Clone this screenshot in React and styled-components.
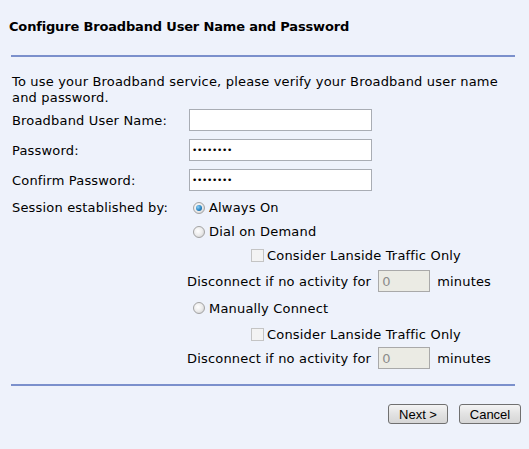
import React from 'react'
import styled, { createGlobalStyle } from 'styled-components'

const GlobalStyle = createGlobalStyle`
  html, body {
    margin: 0;
    padding: 0;
    background: #eef2fb;
  }
  body {
    font-family: "DejaVu Sans", Verdana, sans-serif;
    font-size: 13px;
    letter-spacing: 0.18px;
    color: #000;
  }
`

const Page = styled.div`
  width: 529px;
  height: 449px;
  background: #eef2fb;
  overflow: hidden;
`

const Title = styled.div`
  font-weight: bold;
  letter-spacing: -0.17px;
  height: 16px;
  line-height: 16px;
  padding: 19px 0 0 9px;
`

const Rule = styled.div`
  margin: ${props => props.top}px 14px 0 11px;
  height: 2px;
  background: #7b90cc;
`

const Form = styled.div`
  padding: 17px 0 0 12px;
`

const Intro = styled.p`
  margin: 0 0 -1px 0;
  line-height: 16px;
  width: 505px;
`

const Row = styled.div`
  display: flex;
  align-items: center;
  height: ${props => props.h}px;
`

const Label = styled.div`
  width: 177px;
  flex-shrink: 0;
`

const TextBox = styled.input`
  box-sizing: border-box;
  width: 183px;
  height: 22px;
  margin: 0;
  padding: 0 2px;
  border: 1px solid #a9adb4;
  background: #fff;
  font-family: "DejaVu Sans", Verdana, sans-serif;
  font-size: ${props => (props.type === 'password' ? 9 : 13)}px;
  letter-spacing: ${props => (props.type === 'password' ? '-0.3px' : '0')};
  color: #000;
  outline: none;
`

const Session = styled.div`
  display: flex;
`

const SessionLabel = styled.div`
  width: 175px;
  flex-shrink: 0;
  height: 25px;
  line-height: 25px;
`

const Options = styled.div`
  display: flex;
  flex-direction: column;
`

const OptionRow = styled.div`
  display: flex;
  align-items: center;
  height: ${props => props.h}px;
  padding-left: ${props => props.indent || 0}px;
`

const Radio = styled.span`
  box-sizing: border-box;
  width: 12px;
  height: 12px;
  border-radius: 50%;
  border: 1px solid #a3a3a3;
  background: radial-gradient(circle at 40% 40%, #ffffff 0%, #ececec 50%, #c6c6c6 100%);
  margin-right: 4px;
  display: inline-flex;
  align-items: center;
  justify-content: center;
  flex-shrink: 0;

  &::after {
    content: '';
    display: ${props => (props.checked ? 'block' : 'none')};
    width: 6px;
    height: 6px;
    border-radius: 50%;
    background: radial-gradient(circle at 35% 35%, #8fd0f5 0%, #2a86c4 55%, #0d4f85 100%);
  }
`

const Check = styled.span`
  box-sizing: border-box;
  width: 13px;
  height: 13px;
  border: 1px solid #c4c4c4;
  background: #f3f3f3;
  margin-right: 3px;
  flex-shrink: 0;
`

const MinutesBox = styled.input`
  box-sizing: border-box;
  width: 52px;
  height: 22px;
  margin: 0 7px;
  padding: 0 3px;
  border: 1px solid #a9a9a9;
  background: #ebebe4;
  color: #8c8c8c;
  font-family: "DejaVu Sans", Verdana, sans-serif;
  font-size: 13px;
`

const Footer = styled.div`
  display: flex;
  justify-content: flex-end;
  gap: 11px;
  padding: 18px 8px 0 0;
`

const Button = styled.button`
  box-sizing: border-box;
  width: ${props => props.w}px;
  height: 20px;
  padding: 0;
  border: 1px solid #707070;
  border-radius: 3px;
  background: linear-gradient(#f4f4f4, #e2e2e2 50%, #d6d6d6);
  font-family: "Liberation Sans", Arial, sans-serif;
  font-size: 13px;
  color: #000;
`

function Disconnect({ h }) {
  return (
    <OptionRow h={h}>
      Disconnect if no activity for
      <MinutesBox value="0" disabled readOnly />
      minutes
    </OptionRow>
  )
}

export default function App() {
  return (
    <Page>
      <GlobalStyle />
      <Title>Configure Broadband User Name and Password</Title>
      <Rule top={20} />
      <Form>
        <Intro>To use your Broadband service, please verify your Broadband user name and password.</Intro>
        <Row h={30}>
          <Label>Broadband User Name:</Label>
          <TextBox type="text" />
        </Row>
        <Row h={30}>
          <Label>Password:</Label>
          <TextBox type="password" defaultValue="password" />
        </Row>
        <Row h={30}>
          <Label>Confirm Password:</Label>
          <TextBox type="password" defaultValue="password" />
        </Row>
        <Session>
          <SessionLabel>Session established by:</SessionLabel>
          <Options>
            <OptionRow h={25} indent={6}>
              <Radio checked />
              Always On
            </OptionRow>
            <OptionRow h={23} indent={6}>
              <Radio />
              Dial on Demand
            </OptionRow>
            <OptionRow h={25} indent={64}>
              <Check />
              Consider Lanside Traffic Only
            </OptionRow>
            <Disconnect h={26} />
            <OptionRow h={28} indent={6}>
              <Radio />
              Manually Connect
            </OptionRow>
            <OptionRow h={24} indent={64}>
              <Check />
              Consider Lanside Traffic Only
            </OptionRow>
            <Disconnect h={24} />
          </Options>
        </Session>
      </Form>
      <Rule top={14} />
      <Footer>
        <Button w={60}>Next &gt;</Button>
        <Button w={62}>Cancel</Button>
      </Footer>
    </Page>
  )
}
